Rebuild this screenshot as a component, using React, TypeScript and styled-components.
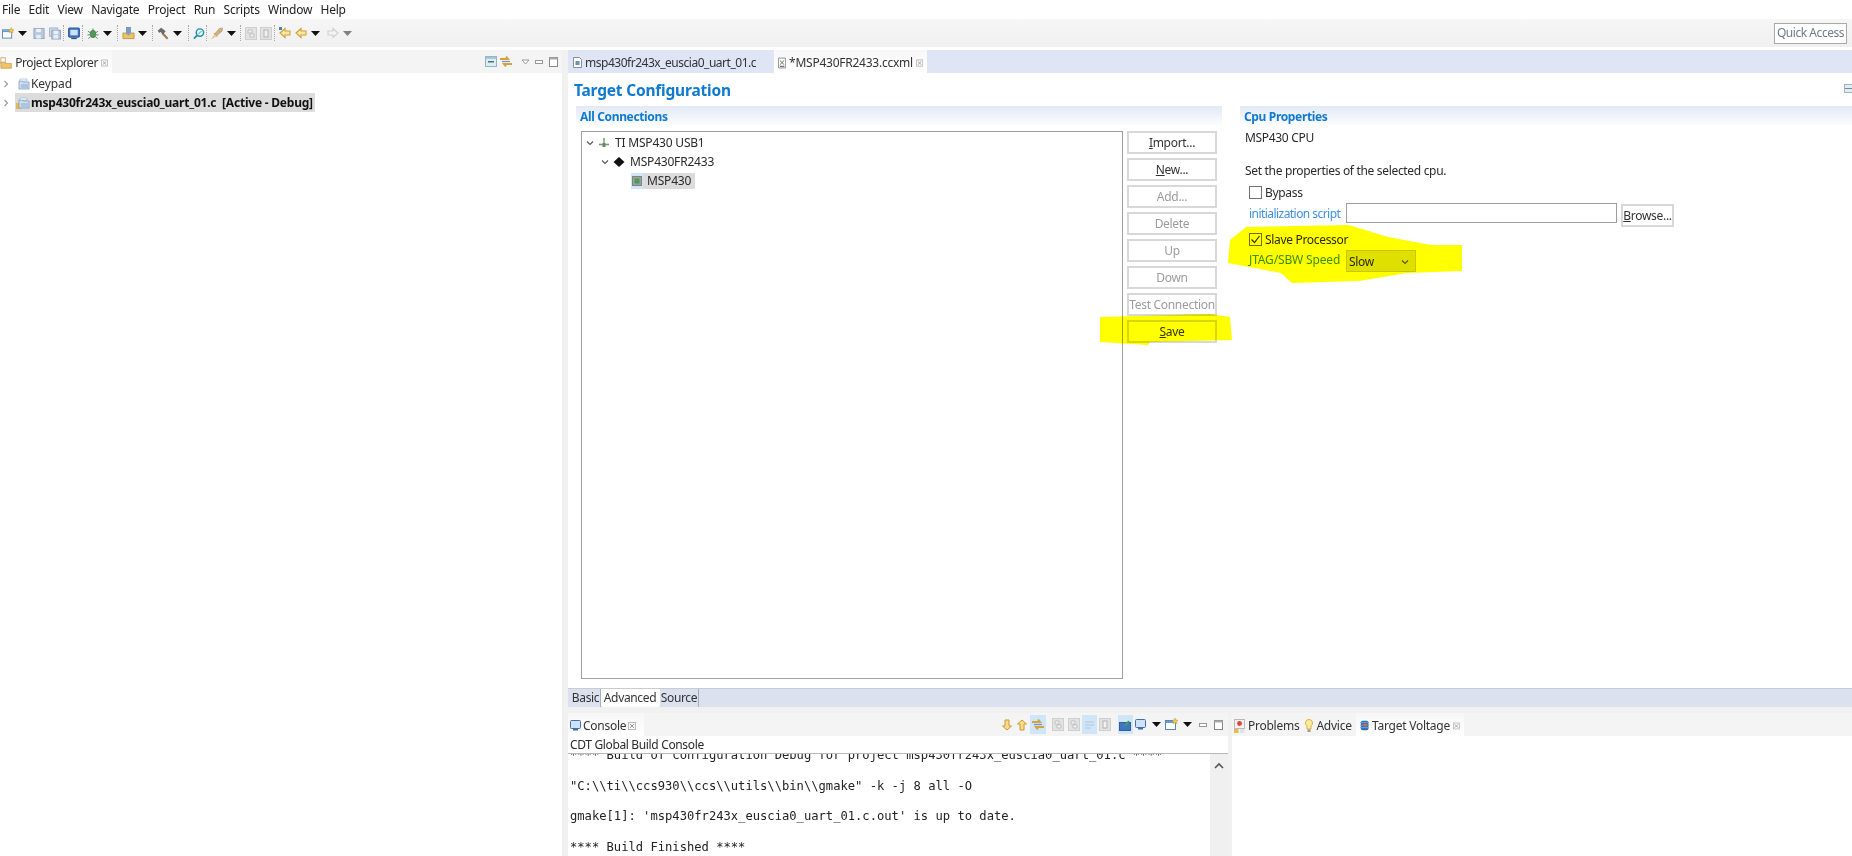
import React from 'react';
import styled, { createGlobalStyle } from 'styled-components';

const UI_FONT = '"Noto Sans", "Open Sans", sans-serif';
const LINK = '#3d8fe6';
const TITLE = '#0f7ad0';

const GlobalStyle = createGlobalStyle`
  html, body { margin: 0; padding: 0; background: #fff; }
  body { font-family: ${UI_FONT}; font-size: 12px; color: #2a2a2a; }
  * { box-sizing: border-box; }
`;

const Page = styled.div`
  position: relative;
  width: 1852px;
  height: 856px;
  overflow: hidden;
  display: flex;
  flex-direction: column;
  background: #fff;
  filter: blur(0.4px);
`;

const MenuBar = styled.div`
  height: 19px;
  display: flex;
  align-items: center;
  gap: 8.4px;
  padding-left: 2px;
  letter-spacing: -0.25px;
  color: #222;
`;

const Toolbar = styled.div`
  height: 28px;
  display: flex;
  align-items: center;
  padding-left: 2px;
  background: linear-gradient(#f6f6f6, #f0f0f0);
`;

const ToolSlot = styled.span<{ $w: number; $mr?: number }>`
  width: ${p => p.$w}px;
  margin-right: ${p => p.$mr ?? 0}px;
  flex: none;
  display: flex;
  align-items: center;
  justify-content: center;
`;

const ToolSep = styled.span`
  width: 1px;
  height: 16px;
  margin: 0 4px 0 2px;
  flex: none;
  border-left: 1px dotted #a8a8a8;
`;

const QuickAccess = styled.div`
  margin-left: auto;
  margin-right: 5px;
  width: 73px;
  height: 21px;
  border: 1px solid #a9a9a9;
  background: #fff;
  color: #6f7b8a;
  text-align: center;
  line-height: 18px;
  letter-spacing: -0.45px;
  white-space: nowrap;
`;

const Workbench = styled.div`
  flex: 1;
  margin-top: 3px;
  display: flex;
  background: #f1f1f1;
  min-height: 0;
`;

const LeftPanel = styled.section`
  width: 562px;
  background: #fff;
  display: flex;
  flex-direction: column;
`;

const RightColumn = styled.div`
  margin-left: 6px;
  flex: 1;
  min-width: 0;
  display: flex;
  flex-direction: column;
`;

const ViewHeader = styled.div`
  height: 23px;
  flex: none;
  display: flex;
  align-items: stretch;
  background: #f4f4f4;
  position: relative;
`;

const ViewTab = styled.div<{ $active?: boolean; $w?: number }>`
  display: flex;
  align-items: center;
  gap: 3px;
  padding: 2px 4px 0 ${p => (p.$active ? 4 : 2)}px;
  width: ${p => (p.$w ? `${p.$w}px` : 'auto')};
  flex: none;
  white-space: nowrap;
  letter-spacing: -0.25px;
  color: #333;
  background: ${p => (p.$active ? 'linear-gradient(#f7f7f7, #ffffff)' : 'transparent')};
`;

const ExplorerTab = styled(ViewTab)`
  padding-left: 0;
  gap: 3px;
  letter-spacing: -0.42px;
`;

const ConsoleTab = styled(ViewTab)`
  padding-left: 2px;
  gap: 2px;
`;

const HeaderActions = styled.div`
  margin-left: auto;
  display: flex;
  align-items: center;
  padding-right: 2px;
`;

const ActionSlot = styled.span<{ $w: number; $on?: boolean }>`
  width: ${p => p.$w}px;
  height: 19px;
  display: flex;
  align-items: center;
  justify-content: center;
  background: ${p => (p.$on ? '#cfe5f8' : 'transparent')};
`;

const Project = styled.div`
  height: 19px;
  margin-left: 2px;
  display: flex;
  align-items: center;
`;

const ProjectLabel = styled.span<{ $active?: boolean }>`
  display: flex;
  align-items: center;
  gap: 1px;
  height: 19px;
  padding: 0 2px 0 1px;
  margin-left: 5px;
  white-space: pre;
  letter-spacing: ${p => (p.$active ? '-0.22px' : '-0.1px')};
  font-weight: ${p => (p.$active ? 700 : 400)};
  color: ${p => (p.$active ? '#111' : '#333')};
  background: ${p => (p.$active ? '#dcdcdc' : 'transparent')};
`;

const ProjectList = styled.div`
  padding-top: 1px;
`;

const EditorStack = styled.section`
  height: 657px;
  flex: none;
  display: flex;
  flex-direction: column;
  background: #fff;
`;

const EditorTabs = styled(ViewHeader)`
  background: #dfe5f4;
`;

const EditorTab1 = styled(ViewTab)`
  padding-left: 5px;
  letter-spacing: -0.48px;
`;

const Form = styled.div`
  flex: 1;
  min-height: 0;
  padding-left: 6px;
  display: flex;
  flex-direction: column;
  position: relative;
`;

const FormTitle = styled.h1`
  margin: 0;
  height: 33px;
  flex: none;
  font-size: 15.5px;
  line-height: 34px;
  font-weight: 700;
  color: ${TITLE};
  letter-spacing: -0.2px;
`;

const CollapseMark = styled.span`
  position: absolute;
  top: 11px;
  right: 0;
  width: 8px;
  height: 9px;
  border: 1px solid #9eb6c0;
  border-right: none;
  background: linear-gradient(#dfeef0 45%, #7a8a94 45%, #7a8a94 60%, #dfeef0 60%);
`;

const Sections = styled.div`
  flex: 1;
  min-height: 0;
  display: flex;
  padding-left: 2px;
  gap: 18px;
`;

const Section = styled.div<{ $w?: number }>`
  ${p => (p.$w ? `width: ${p.$w}px; flex: none;` : 'flex: 1;')}
  display: flex;
  flex-direction: column;
`;

const SectionHeader = styled.div`
  height: 19px;
  flex: none;
  padding-left: 4px;
  line-height: 22px;
  font-weight: 700;
  font-size: 12px;
  letter-spacing: -0.35px;
  color: ${TITLE};
  background: linear-gradient(#e3eaf4, #fbfcfe);
`;

const ConnectionsBody = styled.div`
  flex: 1;
  min-height: 0;
  padding: 6px 5px 9px 5px;
  display: flex;
  gap: 4px;
`;

const TreeBox = styled.div`
  flex: 1;
  border: 1px solid #a0a0a0;
  padding-top: 1px;
`;

const TreeRow = styled.div<{ $indent: number }>`
  height: 19px;
  padding-left: ${p => p.$indent}px;
  display: flex;
  align-items: center;
  letter-spacing: -0.2px;
`;

const TreeIconCell = styled.span<{ $selected?: boolean }>`
  width: 12px;
  height: 16px;
  flex: none;
  display: flex;
  align-items: center;
  justify-content: center;
  background: ${p => (p.$selected ? '#cde6fa' : 'transparent')};
`;

const TreeText = styled.span<{ $selected?: boolean }>`
  height: 16px;
  line-height: 16px;
  padding: 0 4px 0 ${p => (p.$selected ? 4 : 5)}px;
  background: ${p => (p.$selected ? '#dcdcdc' : 'transparent')};
`;

const ChevronCell = styled.span`
  width: 16px;
  flex: none;
  display: flex;
  justify-content: center;
`;

const ButtonColumn = styled.div`
  width: 90px;
  flex: none;
  display: flex;
  flex-direction: column;
  gap: 4px;
`;

const PushButton = styled.button<{ $disabled?: boolean }>`
  height: 23px;
  padding: 0;
  width: 100%;
  border: 2px solid #d8d8d8;
  background: #fff;
  font-family: ${UI_FONT};
  font-size: 12px;
  letter-spacing: -0.3px;
  white-space: nowrap;
  color: ${p => (p.$disabled ? '#9c9c9c' : '#333')};
`;

const PropsBody = styled.div`
  padding-left: 5px;
  display: flex;
  flex-direction: column;
  letter-spacing: -0.32px;
`;

const PlainLine = styled.div<{ $top: number }>`
  margin-top: ${p => p.$top}px;
  height: 17px;
  line-height: 17px;
`;

const FieldRow = styled.div<{ $top: number; $h: number }>`
  margin-top: ${p => p.$top}px;
  height: ${p => p.$h}px;
  padding-left: 4px;
  display: flex;
  align-items: center;
`;

const Check = styled.span`
  width: 13px;
  height: 13px;
  flex: none;
  margin-right: 3px;
  border: 1px solid #707070;
  background: #fff;
  display: flex;
  align-items: center;
  justify-content: center;
`;

const FieldLabel = styled.span<{ $raise?: number; $spacing: number }>`
  width: 97px;
  flex: none;
  padding-bottom: ${p => p.$raise ?? 0}px;
  color: ${LINK};
  letter-spacing: ${p => p.$spacing}px;
  white-space: nowrap;
`;

const TextInput = styled.div`
  width: 271px;
  height: 20px;
  border: 1px solid #9e9e9e;
  background: #fff;
`;

const BrowseButton = styled(PushButton)`
  width: 53px;
  margin-left: 4px;
  position: relative;
  top: 2px;
`;

const Combo = styled.div`
  width: 70px;
  height: 22px;
  background: #e0e0e0;
  border: 1px solid #c8c8c8;
  padding: 1px 6px 0 2px;
  display: flex;
  align-items: center;
  justify-content: space-between;
`;

const BottomTabs = styled.div`
  height: 19px;
  flex: none;
  background: #dce1ef;
  border-top: 1px solid #c9cbd0;
  padding-left: 3px;
  display: flex;
`;

const BottomTab = styled.div<{ $active?: boolean; $w: number }>`
  width: ${p => p.$w}px;
  text-align: center;
  line-height: 17px;
  letter-spacing: -0.35px;
  color: #333;
  background: ${p => (p.$active ? '#fff' : 'transparent')};
  border-right: 1px solid ${p => (p.$active ? '#fff' : '#a8adb8')};
  border-radius: ${p => (p.$active ? '0 0 3px 3px' : '0')};
`;

const BottomRow = styled.div`
  margin-top: 6px;
  flex: 1;
  min-height: 0;
  display: flex;
`;

const ConsolePanel = styled.section`
  width: 660px;
  flex: none;
  background: #fff;
  display: flex;
  flex-direction: column;
`;

const RightPanel = styled.section`
  margin-left: 4px;
  flex: 1;
  background: #fff;
`;

const ConsoleName = styled.div`
  height: 18px;
  flex: none;
  padding-left: 2px;
  line-height: 18px;
  letter-spacing: -0.35px;
  border-bottom: 1px solid #b8b8b8;
`;

const ConsoleBody = styled.div`
  flex: 1;
  min-height: 0;
  display: flex;
`;

const ConsoleText = styled.pre`
  flex: 1;
  margin: 0;
  padding-left: 2px;
  overflow: hidden;
  font-family: "DejaVu Sans Mono", "Liberation Mono", monospace;
  font-size: 12.15px;
  line-height: 15.25px;
  color: #222;
`;

const ConsoleLines = styled.div`
  margin-top: -6px;
`;

const ScrollTrack = styled.div`
  width: 18px;
  flex: none;
  background: #f0f0f0;
  padding-top: 8px;
  display: flex;
  justify-content: center;
  align-items: flex-start;
`;

const Highlight = styled.svg`
  position: absolute;
  left: 0;
  top: 0;
  mix-blend-mode: multiply;
  pointer-events: none;
`;

const Chevron = ({ open }: { open?: boolean }) => (
  <svg width="8" height="8" viewBox="0 0 8 8">
    <polyline
      points={open ? '1,2.5 4,5.5 7,2.5' : '2.5,1 5.5,4 2.5,7'}
      fill="none"
      stroke={open ? '#555' : '#999'}
      strokeWidth="1.1"
    />
  </svg>
);

const CloseMark = () => (
  <svg width="8" height="8" viewBox="0 0 8 8">
    <rect x="0.5" y="0.5" width="7" height="7" fill="none" stroke="#bbb" />
    <path d="M2 2l4 4M6 2l-4 4" stroke="#999" />
  </svg>
);

const DropArrow = ({ color = '#111' }: { color?: string }) => (
  <svg width="9" height="5" viewBox="0 0 9 5">
    <polygon points="0,0 9,0 4.5,5" fill={color} />
  </svg>
);

const ViewMenuArrow = () => (
  <svg width="9" height="6" viewBox="0 0 9 6">
    <polygon points="1,1 8,1 4.5,5" fill="#fff" stroke="#999" />
  </svg>
);

const Minimize = () => (
  <svg width="10" height="6" viewBox="0 0 10 6">
    <rect x="1.5" y="1.5" width="7" height="3" fill="#fff" stroke="#999" />
  </svg>
);

const Maximize = () => (
  <svg width="9" height="10" viewBox="0 0 9 10">
    <rect x="0.5" y="0.5" width="8" height="9" fill="#fff" stroke="#888" />
    <rect x="0.5" y="0.5" width="8" height="2" fill="#aaa" />
  </svg>
);

const NewIcon = () => (
  <svg width="13" height="13" viewBox="0 0 13 13">
    <rect x="0.5" y="2.5" width="10" height="9" fill="#fff" stroke="#5b87b5" />
    <rect x="1" y="3" width="9" height="2" fill="#6a9bd0" />
    <path d="M10 0l1 2 2 .5-1.5 1.3.4 2-1.9-1-1.9 1 .4-2L7 2.5 9 2z" fill="#f2c94c" stroke="#b88a1a" strokeWidth="0.4" />
  </svg>
);

const SaveIcon = ({ stacked }: { stacked?: boolean }) => (
  <svg width="13" height="13" viewBox="0 0 13 13">
    {stacked && <rect x="0.5" y="0.5" width="9" height="9" fill="#cfd8e4" stroke="#a9b6c6" />}
    <rect x={stacked ? 3 : 1} y={stacked ? 3 : 1} width={stacked ? 9.5 : 11} height={stacked ? 9.5 : 11} fill="#b9c8de" stroke="#93a6c0" />
    <rect x={stacked ? 5 : 3.5} y={stacked ? 3.5 : 1.5} width="5" height="3.5" fill="#eef2f7" />
    <rect x={stacked ? 5 : 3.5} y="8" width="5" height="4" fill="#e8edf4" />
  </svg>
);

const TerminalIcon = () => (
  <svg width="13" height="13" viewBox="0 0 13 13">
    <rect x="0.5" y="0.5" width="12" height="10" rx="1" fill="#3f76bf" stroke="#2c5a99" />
    <rect x="2.5" y="2.5" width="8" height="6" fill="#cfe1f5" />
    <rect x="3.5" y="11" width="6" height="1.6" fill="#2c5a99" />
  </svg>
);

const BugIcon = () => (
  <svg width="13" height="13" viewBox="0 0 13 13">
    <ellipse cx="6.5" cy="7" rx="3" ry="4" fill="#4f9a5a" stroke="#2f6e3d" strokeWidth="0.7" />
    <path d="M1 4l3 2M12 4L9 6M0.5 8H3.5M12.5 8H9.5M1.5 12l2.5-2M11.5 12L9 10M6.5 1v2" stroke="#5d7f66" />
  </svg>
);

const FlashIcon = () => (
  <svg width="14" height="14" viewBox="0 0 14 14">
    <path d="M1 7h3l1.5 2h3L10 7h3v6H1z" fill="#edc36c" stroke="#b98a2d" strokeWidth="0.8" />
    <rect x="5" y="1" width="4" height="6" fill="#7c9dc9" stroke="#5679a8" strokeWidth="0.7" />
    <polygon points="4,6 10,6 7,9.5" fill="#7c9dc9" />
  </svg>
);

const HammerIcon = () => (
  <svg width="13" height="13" viewBox="0 0 13 13">
    <path d="M6.5 5.5l5.5 6-1.3 1.2-5.6-5.8z" fill="#a67a4a" stroke="#7a5630" strokeWidth="0.4" />
    <path d="M1 3.5L4.5.5 9 4 6.5 7 4 4.6 2.5 5.5z" fill="#6a6a6a" stroke="#444" strokeWidth="0.4" />
  </svg>
);

const SearchIcon = () => (
  <svg width="13" height="13" viewBox="0 0 13 13">
    <circle cx="7.5" cy="5.5" r="4" fill="#e4f5f7" stroke="#1f93a8" strokeWidth="1.6" />
    <path d="M4.5 8.5L1 12" stroke="#1f93a8" strokeWidth="2" />
    <path d="M6 7l3-3" stroke="#1f93a8" />
  </svg>
);

const RocketIcon = () => (
  <svg width="13" height="13" viewBox="0 0 13 13">
    <path d="M4 7l5-6 3.5-.5L12 4l-6 5z" fill="#c9b389" stroke="#97805a" strokeWidth="0.5" />
    <circle cx="9" cy="3.8" r="1" fill="#e9a23b" />
    <path d="M1 12l3-4 1.2 1.2z" fill="#f3d25a" stroke="#caa02c" strokeWidth="0.4" />
    <path d="M3 6h2L3.5 8zM7 10V8L5 9.5z" fill="#ef8f5a" />
  </svg>
);

const GrayDocIcon = ({ tall }: { tall?: boolean }) => (
  <svg width="12" height="13" viewBox="0 0 12 13">
    <rect x="0.5" y="0.5" width="11" height="12" fill="#e2e2e2" stroke="#cfcfcf" />
    {tall ? (
      <rect x="4" y="3" width="4" height="7" fill="#f2f2f2" stroke="#b3b3b3" />
    ) : (
      <path d="M3 3h4v3H3zM5 7h4v3H5z" fill="#f2f2f2" stroke="#b3b3b3" strokeWidth="0.7" />
    )}
  </svg>
);

const NavArrow = ({ faded, dot, flip }: { faded?: boolean; dot?: boolean; flip?: boolean }) => (
  <svg width="12" height="12" viewBox="0 0 12 12">
    <g transform={flip ? 'translate(12,0) scale(-1,1)' : undefined}>
      <path
        d="M1 6l5-4.5V4h5v4H6v2.5z"
        fill={faded ? '#f4f4f4' : '#fbe6a9'}
        stroke={faded ? '#cfcfcf' : '#d2a033'}
        strokeWidth="1.1"
      />
    </g>
    {dot && <rect x="0" y="0" width="3" height="3" fill="#4d7fb8" />}
  </svg>
);

const toolbarIcons: Array<[string, React.ReactNode, number, number?]> = [
  ['new', <NewIcon />, 12, 4],
  ['new-a', <DropArrow />, 9, 6],
  ['save', <SaveIcon />, 12, 4],
  ['saveall', <SaveIcon stacked />, 12, 0],
  ['s1', null, 0],
  ['term', <TerminalIcon />, 12, 0],
  ['s2', null, 0],
  ['bug', <BugIcon />, 12, 4],
  ['bug-a', <DropArrow />, 9, 3],
  ['s3', null, 0],
  ['flash', <FlashIcon />, 13, 3],
  ['flash-a', <DropArrow />, 9, 3],
  ['s4', null, 0],
  ['hammer', <HammerIcon />, 12, 4],
  ['hammer-a', <DropArrow />, 9, 4],
  ['s5', null, 0],
  ['search', <SearchIcon />, 12, -1],
  ['s6', null, 0],
  ['rocket', <RocketIcon />, 12, 4],
  ['rocket-a', <DropArrow />, 9, 2],
  ['s7', null, 0],
  ['gray1', <GrayDocIcon />, 12, 3],
  ['gray2', <GrayDocIcon tall />, 12, 0],
  ['s8', null, 0],
  ['back1', <NavArrow dot />, 12, 4],
  ['back2', <NavArrow />, 12, 4],
  ['back2-a', <DropArrow />, 9, 7],
  ['fwd', <NavArrow faded flip />, 12, 4],
  ['fwd-a', <DropArrow color="#808080" />, 9, 0],
];

const ExplorerIcon = () => (
  <svg width="14" height="14" viewBox="0 0 14 14">
    <rect x="1" y="1" width="5" height="6" fill="#fff" stroke="#c7a266" />
    <path d="M1 6h4l1 1.5h7V13H1z" fill="#f0c468" stroke="#b88c38" strokeWidth="0.7" />
  </svg>
);

const CollapseAllIcon = () => (
  <svg width="12" height="13" viewBox="0 0 12 13">
    <rect x="0.5" y="1.5" width="11" height="10" fill="#dceef1" stroke="#93b4c0" />
    <rect x="3" y="6" width="6" height="1.5" fill="#4c6f86" />
    <rect x="1" y="2" width="10" height="2" fill="#a8c8d4" />
  </svg>
);

const LinkIcon = () => (
  <svg width="14" height="13" viewBox="0 0 14 13">
    <path d="M1 4h8l-2-2.5M13 9H5l2 2.5" fill="none" stroke="#d7a23c" strokeWidth="2" />
    <path d="M3 6.5h8" stroke="#6e93b8" strokeWidth="1.2" />
  </svg>
);

const ProjectIcon = ({ active }: { active?: boolean }) => (
  <svg width="14" height="14" viewBox="0 0 14 14">
    {active && <rect x="0" y="7" width="5" height="6" fill="#e9b64f" />}
    <path d="M3 4h3l1 1h6v7H3z" fill="#cfe0f2" stroke="#7b9cc4" strokeWidth="0.8" />
    <path d="M4 2h7v2H4z" fill="#fff" stroke="#9fb6d1" strokeWidth="0.7" />
    <path d="M5 8h7M5 10h7" stroke="#7b9cc4" strokeWidth="0.8" />
  </svg>
);

const SourceFileIcon = () => (
  <svg width="9" height="11" viewBox="0 0 9 11">
    <path d="M.5.5h6l2 2v8H.5z" fill="#fff" stroke="#8a8f96" />
    <rect x="2.5" y="4" width="4" height="4" fill="#6d8fb0" />
  </svg>
);

const XmlFileIcon = () => (
  <svg width="9" height="12" viewBox="0 0 9 12">
    <path d="M.5.5h8v11h-8z" fill="#fff" stroke="#888" />
    <path d="M2 3l5 5M7 3L2 8" stroke="#4d6a50" />
    <rect x="2" y="9" width="5" height="1.5" fill="#777" />
  </svg>
);

const UsbIcon = () => (
  <svg width="12" height="11" viewBox="0 0 12 11">
    <path d="M6 1v7" stroke="#6a9a6d" strokeWidth="1.4" />
    <path d="M1 7.5h10" stroke="#8c8c8c" strokeWidth="1.6" />
    <rect x="4.5" y="6" width="3" height="4" fill="#5d8d62" />
  </svg>
);

const ChipIcon = () => (
  <svg width="12" height="12" viewBox="0 0 12 12">
    <polygon points="6,1 11.5,6 6,11 .5,6" fill="#111" />
  </svg>
);

const CpuIcon = () => (
  <svg width="10" height="10" viewBox="0 0 10 10">
    <rect x="0.5" y="0.5" width="9" height="9" fill="#9aa39b" stroke="#7d857e" />
    <rect x="2.5" y="2.5" width="5" height="5" fill="#4c9a5f" />
  </svg>
);

const ConsoleTabIcon = () => (
  <svg width="11" height="11" viewBox="0 0 11 11">
    <rect x="0.5" y="0.5" width="10" height="8" rx="1" fill="#cfe1f5" stroke="#3f6fae" />
    <rect x="3" y="9" width="5" height="1.5" fill="#3f6fae" />
  </svg>
);

const ProblemsIcon = () => (
  <svg width="11" height="14" viewBox="0 0 11 14">
    <rect x="0.5" y="0.5" width="10" height="9" fill="#fdf1f1" stroke="#b9b9b9" />
    <circle cx="5.5" cy="4.5" r="2.4" fill="#d8433f" />
    <rect x="0" y="10" width="4.5" height="4" fill="#e8b94c" />
    <rect x="6" y="10" width="4.5" height="4" fill="#dfe3e8" />
  </svg>
);

const BulbIcon = () => (
  <svg width="8" height="14" viewBox="0 0 8 14">
    <path d="M4 .5a3.5 3.5 0 0 1 2 6.4V10H2V6.9A3.5 3.5 0 0 1 4 .5z" fill="#fbeaa4" stroke="#dcb335" />
    <rect x="2.5" y="10.5" width="3" height="2.5" fill="#9a9a9a" />
  </svg>
);

const VoltageIcon = () => (
  <svg width="11" height="13" viewBox="0 0 11 13">
    <rect x="1" y="1" width="9" height="11" rx="2" fill="#2f6fb3" />
    <path d="M0 3h11M0 6h11M0 9h11" stroke="#7da9d6" />
    <circle cx="6" cy="6" r="2" fill="#e0663c" />
  </svg>
);

const ConsoleActions: Array<[string, React.ReactNode, boolean?]> = [
  ['down', <svg width="10" height="12" viewBox="0 0 10 12"><path d="M3 1h4v6h2.5L5 11 .5 7H3z" fill="#f7dc8f" stroke="#cc9a2e" /></svg>],
  ['up', <svg width="10" height="12" viewBox="0 0 10 12"><path d="M3 11h4V5h2.5L5 1 .5 5H3z" fill="#f7dc8f" stroke="#cc9a2e" /></svg>],
  ['link', <LinkIcon />, true],
  ['gap1', null],
  ['d1', <GrayDocIcon />],
  ['d2', <GrayDocIcon />],
  ['d3', <svg width="11" height="11" viewBox="0 0 11 11"><path d="M1 3h9M1 6h9M1 9h6" stroke="#b6c8d8" /></svg>, true],
  ['d4', <GrayDocIcon tall />],
  ['gap2', null],
  ['pin', <svg width="12" height="12" viewBox="0 0 12 12"><rect x="0.5" y="3.5" width="11" height="8" fill="#3f76bf" stroke="#2f5f9f" /><path d="M6 7l4-5" stroke="#3aa35c" strokeWidth="2" /></svg>, true],
  ['term', <ConsoleTabIcon />],
  ['term-a', <DropArrow />],
  ['new', <NewIcon />],
  ['new-a', <DropArrow />],
  ['min', <Minimize />],
  ['max', <Maximize />],
];

const App = () => (
  <Page>
    <GlobalStyle />
    <MenuBar>
      {['File', 'Edit', 'View', 'Navigate', 'Project', 'Run', 'Scripts', 'Window', 'Help'].map(m => (
        <span key={m}>{m}</span>
      ))}
    </MenuBar>
    <Toolbar>
      {toolbarIcons.map(([id, icon, w, mr]) =>
        icon === null ? (
          <ToolSep key={id} />
        ) : (
          <ToolSlot key={id} $w={w} $mr={mr}>
            {icon}
          </ToolSlot>
        ),
      )}
      <QuickAccess>Quick Access</QuickAccess>
    </Toolbar>
    <Workbench>
      <LeftPanel>
        <ViewHeader>
          <ExplorerTab $active $w={112}>
            <ExplorerIcon />
            <span>Project Explorer</span>
            <CloseMark />
          </ExplorerTab>
          <HeaderActions>
            <ActionSlot $w={15}><CollapseAllIcon /></ActionSlot>
            <ActionSlot $w={16}><LinkIcon /></ActionSlot>
            <ActionSlot $w={5} />
            <ActionSlot $w={13}><ViewMenuArrow /></ActionSlot>
            <ActionSlot $w={14}><Minimize /></ActionSlot>
            <ActionSlot $w={14}><Maximize /></ActionSlot>
          </HeaderActions>
        </ViewHeader>
        <ProjectList>
          <Project>
            <Chevron />
            <ProjectLabel>
              <ProjectIcon />
              Keypad
            </ProjectLabel>
          </Project>
          <Project>
            <Chevron />
            <ProjectLabel $active>
              <ProjectIcon active />
              {'msp430fr243x_euscia0_uart_01.c  [Active - Debug]'}
            </ProjectLabel>
          </Project>
        </ProjectList>
      </LeftPanel>
      <RightColumn>
        <EditorStack>
          <EditorTabs>
            <EditorTab1 $w={206}>
              <SourceFileIcon />
              <span>msp430fr243x_euscia0_uart_01.c</span>
            </EditorTab1>
            <ViewTab $active $w={153}>
              <XmlFileIcon />
              <span>*MSP430FR2433.ccxml</span>
              <CloseMark />
            </ViewTab>
          </EditorTabs>
          <Form>
            <FormTitle>Target Configuration</FormTitle>
            <CollapseMark />
            <Sections>
              <Section $w={646}>
                <SectionHeader>All Connections</SectionHeader>
                <ConnectionsBody>
                  <TreeBox>
                    <TreeRow $indent={0}>
                      <ChevronCell><Chevron open /></ChevronCell>
                      <TreeIconCell><UsbIcon /></TreeIconCell>
                      <TreeText>TI MSP430 USB1</TreeText>
                    </TreeRow>
                    <TreeRow $indent={15}>
                      <ChevronCell><Chevron open /></ChevronCell>
                      <TreeIconCell><ChipIcon /></TreeIconCell>
                      <TreeText>MSP430FR2433</TreeText>
                    </TreeRow>
                    <TreeRow $indent={49}>
                      <TreeIconCell $selected><CpuIcon /></TreeIconCell>
                      <TreeText $selected>MSP430</TreeText>
                    </TreeRow>
                  </TreeBox>
                  <ButtonColumn>
                    <PushButton><u>I</u>mport...</PushButton>
                    <PushButton><u>N</u>ew...</PushButton>
                    <PushButton $disabled>Add...</PushButton>
                    <PushButton $disabled>Delete</PushButton>
                    <PushButton $disabled>Up</PushButton>
                    <PushButton $disabled>Down</PushButton>
                    <PushButton $disabled>Test Connection</PushButton>
                    <PushButton><u>S</u>ave</PushButton>
                  </ButtonColumn>
                </ConnectionsBody>
              </Section>
              <Section>
                <SectionHeader>Cpu Properties</SectionHeader>
                <PropsBody>
                  <PlainLine $top={4}>MSP430 CPU</PlainLine>
                  <PlainLine $top={16}>Set the properties of the selected cpu.</PlainLine>
                  <FieldRow $top={6} $h={14}>
                    <Check />
                    Bypass
                  </FieldRow>
                  <FieldRow $top={4} $h={20}>
                    <FieldLabel $spacing={-0.55}>initialization script</FieldLabel>
                    <TextInput />
                    <BrowseButton><u>B</u>rowse...</BrowseButton>
                  </FieldRow>
                  <FieldRow $top={9} $h={14}>
                    <Check>
                      <svg width="11" height="11" viewBox="0 0 11 11">
                        <polyline points="1.5,5.5 4.5,8.5 9.5,2" fill="none" stroke="#333" strokeWidth="1.2" />
                      </svg>
                    </Check>
                    Slave Processor
                  </FieldRow>
                  <FieldRow $top={4} $h={22}>
                    <FieldLabel $spacing={-0.15} $raise={4}>JTAG/SBW Speed</FieldLabel>
                    <Combo>
                      Slow
                      <Chevron open />
                    </Combo>
                  </FieldRow>
                </PropsBody>
              </Section>
            </Sections>
          </Form>
          <BottomTabs>
            <BottomTab $w={30}>Basic</BottomTab>
            <BottomTab $w={59} $active>Advanced</BottomTab>
            <BottomTab $w={39}>Source</BottomTab>
          </BottomTabs>
        </EditorStack>
        <BottomRow>
          <ConsolePanel>
            <ViewHeader>
              <ConsoleTab $active $w={76}>
                <ConsoleTabIcon />
                <span>Console</span>
                <CloseMark />
              </ConsoleTab>
              <HeaderActions>
                {ConsoleActions.map(([id, icon, on]) => (
                  <ActionSlot key={id} $w={icon === null ? 5 : 15.5} $on={on}>
                    {icon}
                  </ActionSlot>
                ))}
              </HeaderActions>
            </ViewHeader>
            <ConsoleName>CDT Global Build Console</ConsoleName>
            <ConsoleBody>
              <ConsoleText>
                <ConsoleLines>
                  {`**** Build of configuration Debug for project msp430fr243x_euscia0_uart_01.c ****

"C:\\\\ti\\\\ccs930\\\\ccs\\\\utils\\\\bin\\\\gmake" -k -j 8 all -O

gmake[1]: 'msp430fr243x_euscia0_uart_01.c.out' is up to date.

**** Build Finished ****`}
                </ConsoleLines>
              </ConsoleText>
              <ScrollTrack>
                <svg width="10" height="7" viewBox="0 0 10 7">
                  <polyline points="1,6 5,2 9,6" fill="none" stroke="#555" strokeWidth="1.6" />
                </svg>
              </ScrollTrack>
            </ConsoleBody>
          </ConsolePanel>
          <RightPanel>
            <ViewHeader>
              <ViewTab>
                <ProblemsIcon />
                <span>Problems</span>
              </ViewTab>
              <ViewTab>
                <BulbIcon />
                <span>Advice</span>
              </ViewTab>
              <ViewTab $active $w={108}>
                <VoltageIcon />
                <span>Target Voltage</span>
                <CloseMark />
              </ViewTab>
            </ViewHeader>
          </RightPanel>
        </BottomRow>
      </RightColumn>
    </Workbench>
    <Highlight width="1852" height="856" viewBox="0 0 1852 856">
      <path
        d="M1246 227L1349 225L1388 237L1431 245L1462 245L1462 271L1407 273L1359 281L1292 283L1281 273L1228 263L1230 240Z"
        fill="#ffff00"
      />
      <path d="M1100 317L1210 314L1230 317L1232 340L1150 342L1148 345L1100 342Z" fill="#ffff00" />
    </Highlight>
  </Page>
);

export default App;
